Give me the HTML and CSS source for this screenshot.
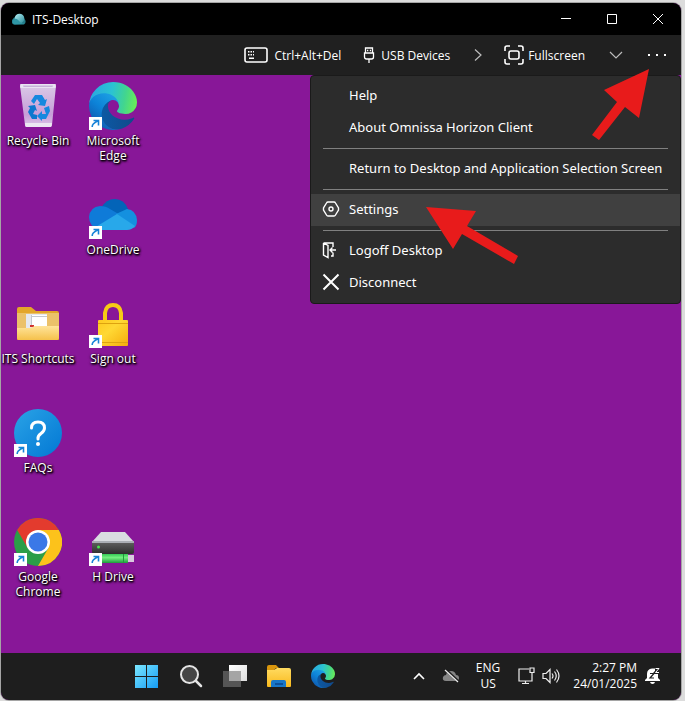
FILE: index.html
```html
<!DOCTYPE html>
<html lang="en">
<head>
<meta charset="utf-8">
<meta name="viewport" content="width=device-width, initial-scale=1">
<title>ITS-Desktop</title>
<link rel="stylesheet" href="styles.css">
</head>
<body>
<svg class="defs" aria-hidden="true">
  <defs>
    <linearGradient id="edge-a" x1="63" y1="177" x2="241" y2="177" gradientUnits="userSpaceOnUse"><stop offset="0" stop-color="#0c59a4"/><stop offset="1" stop-color="#114a8b"/></linearGradient>
    <linearGradient id="edge-b" x1="150" y1="100" x2="46" y2="225" gradientUnits="userSpaceOnUse"><stop offset="0" stop-color="#1b9de2"/><stop offset=".5" stop-color="#0d83d8"/><stop offset="1" stop-color="#0f5fb4"/></linearGradient>
    <linearGradient id="edge-c" x1="10" y1="60" x2="250" y2="100" gradientUnits="userSpaceOnUse"><stop offset="0" stop-color="#2aa8e0"/><stop offset=".45" stop-color="#2bc3d2"/><stop offset=".75" stop-color="#42d58f"/><stop offset="1" stop-color="#66eb5b"/></linearGradient>
    <linearGradient id="yellow" x1="0" y1="0" x2="0" y2="1"><stop offset="0" stop-color="#ffdb61"/><stop offset="1" stop-color="#f9b91c"/></linearGradient>
    <linearGradient id="pale" x1="0" y1="0" x2="0" y2="1"><stop offset="0" stop-color="#ffe49a"/><stop offset="1" stop-color="#f5c14b"/></linearGradient>
    <linearGradient id="lock" x1="0" y1="0" x2="1" y2="1"><stop offset="0" stop-color="#ffc91f"/><stop offset=".4" stop-color="#ffd834"/><stop offset="1" stop-color="#f5ac0c"/></linearGradient>
    <linearGradient id="bin" x1="0" y1="0" x2="0" y2="1"><stop offset="0" stop-color="#d9c8e6"/><stop offset=".7" stop-color="#c79dd8"/><stop offset="1" stop-color="#dcc9e8"/></linearGradient>
    <linearGradient id="help" x1="0" y1="0" x2="1" y2="1"><stop offset="0" stop-color="#2aa3e6"/><stop offset="1" stop-color="#0277d4"/></linearGradient>
    <linearGradient id="win" x1="0" y1="0" x2="1" y2="1" ><stop offset="0" stop-color="#7be7ff"/><stop offset="1" stop-color="#159cf5"/></linearGradient>
    <linearGradient id="drive" x1="0" y1="0" x2="0" y2="1"><stop offset="0" stop-color="#5b5b5b"/><stop offset="1" stop-color="#2e2e2e"/></linearGradient>
    <linearGradient id="pipe" x1="0" y1="0" x2="0" y2="1"><stop offset="0" stop-color="#35c956"/><stop offset=".4" stop-color="#74f080"/><stop offset="1" stop-color="#1d9c3c"/></linearGradient>
    <linearGradient id="teal" x1="0" y1="0" x2="1" y2="1"><stop offset="0" stop-color="#b5f1f5"/><stop offset="1" stop-color="#2c8d9b"/></linearGradient>
    <linearGradient id="pane" x1="0" y1="0" x2="1" y2="1"><stop offset="0" stop-color="#ffffff"/><stop offset="1" stop-color="#dddddd"/></linearGradient>
  </defs>
  <symbol id="edge" viewBox="0 0 256 256">
    <path fill="url(#edge-a)" d="M235.68 190.46a93.73 93.73 0 01-10.54 4.71 101.87 101.87 0 01-35.9 6.46c-47.32 0-88.54-32.55-88.54-74.32A31.48 31.48 0 01117.13 100c-42.8 1.8-53.8 46.4-53.8 72.53 0 73.88 68.09 81.37 82.76 81.37 7.91 0 19.84-2.3 27-4.56l1.31-.44a128.34 128.34 0 0066.6-52.8 4 4 0 00-5.32-5.64z"/>
    <path fill="url(#edge-b)" d="M105.73 241.42a79.2 79.2 0 01-22.74-21.34 80.72 80.72 0 0129.53-120c3.12-1.47 8.45-4.13 15.54-4a32.35 32.35 0 0125.69 13 31.88 31.88 0 016.36 18.66c0-.21 24.46-79.6-80-79.6-43.9 0-80 41.66-80 78.21a130.15 130.15 0 0012.11 56 128 128 0 00156.38 67.11 75.55 75.55 0 01-62.78-8z"/>
    <path fill="url(#edge-c)" d="M152.33 148.86c-.81 1-3.3 2.5-3.3 5.66 0 2.61 1.7 5.12 4.72 7.23 14.38 10 41.49 8.68 41.56 8.68a59.56 59.56 0 0030.27-8.35A61.38 61.38 0 00256 109.18c.26-22.41-8-37.31-11.34-43.91C223.46 23.84 177.72 0 128 0A128 128 0 000 126.2c.48-36.54 36.8-66.05 80-66.05 3.5 0 23.46.34 42 10.07 16.34 8.58 24.9 18.94 30.85 29.21 6.18 10.67 7.28 24.15 7.28 29.52s-2.74 13.33-7.8 19.91z"/>
  </symbol>
  <symbol id="badge" viewBox="0 0 13 13">
    <path fill="#fff" d="M0 0h13v13H0z"/>
    <path fill="none" stroke="#1683d8" stroke-width="1.6" d="M3.2 10c0-2.500 1-3.600 5.600-6.300M4.500 3.500h5v5"/>
  </symbol>
</svg>

<div class="window">
  <header class="titlebar">
    <svg class="app-icon" viewBox="0 0 14 12" aria-hidden="true"><path fill="#237c89" d="M3 11.500A3 3 0 0 1 1 6c.5-1.500 2-2 3-2l7 1c3 1 3.500 5 1 6.500z"/><circle cx="7.500" cy="5.500" r="4.800" fill="url(#teal)"/><path fill="#2f96a5" d="M2 6c3-1 4 1 6 3s3 1 4.500 2L3 11.500C0 11 0 7 2 6z"/></svg>
    <h1 class="title">ITS-Desktop</h1>
    <button class="caption" aria-label="Minimize"><svg viewBox="0 0 12 12"><path d="M1 5.500h10"/></svg></button>
    <button class="caption" aria-label="Maximize"><svg viewBox="0 0 12 12"><path d="M1.500 1.500h9v9h-9z"/></svg></button>
    <button class="caption" aria-label="Close"><svg viewBox="0 0 12 12"><path d="M1 1l10 10M11 1L1 11"/></svg></button>
  </header>

  <nav class="toolbar" aria-label="Session">
    <button class="tool keys"><svg width="24" height="16" viewBox="0 0 24 16"><rect x="1" y="1" width="22" height="14" rx="2" fill="none" stroke="#fff" stroke-width="1.600"/><path fill="#fff" d="M4 4h1.500v1.500H4zM6.500 4H8v1.500H6.500zM9 4h1v1.500H9zM4 7h1.500v1.500H4zM6.500 7H8v1.500H6.500zM9 7h1v1.500H9zM5 10.500h5V12H5z"/></svg>Ctrl+Alt+Del</button>
    <button class="tool usb"><svg width="12" height="16" viewBox="0 0 12 16"><path fill="none" stroke="#fff" stroke-width="1.300" d="M2.500 6V1h7v5M1.500 6h9v4q0 2-2 2h-5q-2 0-2-2zM6 12v4"/><path fill="#fff" d="M4 2.800h1.300v1.500H4zM6.800 2.800h1.300v1.500H6.800z"/></svg>USB Devices</button>
    <button class="tool more" aria-label="Show more"><svg width="8" height="14" viewBox="0 0 8 14"><path fill="none" stroke="#bbb" stroke-width="1.200" d="M1 1.500L7 7l-6 5.500"/></svg></button>
    <button class="tool full"><svg width="20" height="20" viewBox="0 0 20 20"><path fill="none" stroke="#fff" stroke-width="1.600" d="M1 6V3q0-2 2-2h3M14 1h3q2 0 2 2v3M19 14v3q0 2-2 2h-3M6 19H3q-2 0-2-2v-3"/><rect x="5" y="6" width="10" height="8" rx="2" fill="none" stroke="#fff" stroke-width="1.600"/></svg>Fullscreen</button>
    <button class="tool down" aria-label="Display options"><svg width="14" height="8" viewBox="0 0 14 8"><path fill="none" stroke="#bbb" stroke-width="1.200" d="M1 1l6 6 6-6"/></svg></button>
    <button class="tool dots" aria-label="Options" aria-expanded="true"><svg width="20" height="4" viewBox="0 0 20 4"><path fill="#fff" d="M1 1h2v2H1zM9 1h2v2H9zM17 1h2v2h-2z"/></svg></button>
  </nav>

  <main class="desktop">
    <div class="icons">
      <button class="shortcut"><svg viewBox="0 0 48 48"><path fill="url(#bin)" d="M6 4h36l-4 39q0 2-2 2H13q-2 0-2-2z"/><path fill="#e9e3f2" d="M6 3q0-1 1-1h34q1 0 1 1l-.5 3h-35z"/><path fill="#c5b2d8" d="M9 3.500h30l-.5 1.500h-29z"/><path fill="#ece6f2" d="M11 41h27l-.5 3q-.5 1-1.500 1H13q-1.500 0-1.700-1z"/><path fill="#1688df" d="M17 19l4-6h7l3 5 2-1-2 7-7-1 2-2-3-4-3 5z"/><path fill="#0d78cf" d="M14 24l7-1 2 6-2-1-2 4 4 1v4h-5l-4-7 2-4z"/><path fill="#1688df" d="M30 26l5-2 1 5-4 8h-4v2l-5-5 5-5v3h4z"/></svg><span>Recycle Bin</span></button>
      <button class="shortcut"><svg viewBox="0 0 48 48"><use href="#edge" width="48" height="48"/><use href="#badge" y="35" width="13" height="13"/></svg><span>Microsoft Edge</span></button>

      <button class="shortcut second"><svg viewBox="0 0 48 48"><path fill="#0364b8" d="M12 17Q17 8 26 8q9 0 13 10L26 30z"/><path fill="#0f7bd8" d="M11 15q6 0 10 3l12 7-24 13Q0 35 0 26 1 16 11 15z"/><path fill="#1490df" d="M27 23l11-5q9 1 10 11 0 6-3 8z"/><path fill="#28a8ea" d="M5 37l23-14 18 12q-3 4-8 4H12q-4 0-7-2z"/><use href="#badge" y="35" width="13" height="13"/></svg><span>OneDrive</span></button>

      <button class="shortcut"><svg viewBox="0 0 48 48"><path fill="#e3a62a" d="M3 9q0-2 2-2h12l5 4h21q2 0 2 2v26q0 1-1 1H4q-1 0-1-1z"/><path fill="#ebc16a" d="M3 13h42v15H3z"/><path fill="#e5e8ef" d="M12 14h21v15H12z"/><path fill="#fff" d="M18 15h15v11H18z"/><path fill="#c3c7d0" d="M17 15h1v11h-1zM18 16h15v1H18z"/><path fill="#cf3030" d="M16 25h4v2h-4z"/><path fill="url(#pale)" d="M3 28h13l5-2h24v12q0 2-2 2H5q-2 0-2-2z"/></svg><span>ITS Shortcuts</span></button>
      <button class="shortcut"><svg viewBox="0 0 48 48"><path fill="none" stroke="#f6cb15" stroke-width="4" d="M16 23V13q1-8 8-8t8 8v10"/><rect x="9" y="20" width="30" height="26" rx="1" fill="url(#lock)"/><path stroke="#dda20f" d="M9 23.500h30M9 42.500h30"/><use href="#badge" y="35" width="13" height="13"/></svg><span>Sign out</span></button>

      <button class="shortcut"><svg viewBox="0 0 48 48"><circle cx="24" cy="24" r="24" fill="url(#help)"/><path fill="none" stroke="#fff" stroke-width="3" stroke-linecap="round" d="M17.500 19q0-6 6.500-6t6.500 6q0 3-3.500 5.500T24 30"/><circle cx="24" cy="35" r="2" fill="#fff"/><use href="#badge" y="35" width="13" height="13"/></svg><span>FAQs</span></button>

      <button class="shortcut first"><svg viewBox="0 0 48 48"><circle cx="24" cy="24" r="24" fill="#2b9e48"/><path fill="#e33b2e" d="M3.200 12A24 24 0 0 1 44.800 12H24L13.600 30z"/><path fill="#fcc21b" d="M44.800 12A24 24 0 0 1 24 48L34.400 30 24 12z"/><circle cx="24" cy="24" r="12" fill="#fff"/><circle cx="24" cy="24" r="9.500" fill="#3b78e7"/><use href="#badge" y="35" width="13" height="13"/></svg><span>Google Chrome</span></button>
      <button class="shortcut"><svg viewBox="0 0 48 48"><path fill="#d9dce0" d="M12 14h24l9 10H3z"/><path fill="#aaaeb4" d="M3 23h42v2H3z"/><path fill="url(#drive)" d="M3 25h42v9q0 2-2 2H5q-2 0-2-2z"/><circle cx="9.500" cy="29" r="1.500" fill="#49e64e"/><path fill="url(#pipe)" d="M10 36h29v9H10z"/><path fill="#209b3c" d="M34 36h1v9h-1z"/><path fill="#d9c9de" d="M39 37h6v7h-6z"/><use href="#badge" y="35" width="13" height="13"/></svg><span>H Drive</span></button>
    </div>

    <div class="menu" role="menu">
      <button role="menuitem">Help</button>
      <button role="menuitem">About Omnissa Horizon Client</button>
      <hr>
      <button role="menuitem">Return to Desktop and Application Selection Screen</button>
      <hr>
      <button role="menuitem" class="active"><svg viewBox="0 0 18 18"><path d="M6 2h6q1 0 1.500 1L16.500 8v2l-3 5q-.5 1-1.500 1H6q-1 0-1.500-1l-3-5V8l3-5Q5 2 6 2z"/><circle cx="9" cy="9" r="2"/></svg>Settings</button>
      <hr>
      <button role="menuitem"><svg viewBox="0 0 18 18"><path d="M1.500 2H11v4M1.500 2v12l4.500 2.500V4.500L1.500 2M11 11.500V15H9M14 9H8M10.500 6.500L8 9l2.500 2.500"/></svg>Logoff Desktop</button>
      <button role="menuitem"><svg viewBox="0 0 18 18"><path stroke-width="2" d="M1.500 1.500l15 15M16.500 1.500l-15 15"/></svg>Disconnect</button>
    </div>
  </main>

  <footer class="taskbar">
    <nav class="apps" aria-label="Taskbar">
      <button aria-label="Start"><svg viewBox="0 0 24 24"><path fill="url(#win)" d="M0 1h11v11H0zM12 1h11v11H12zM0 13h11v11H0zM12 13h11v11H12z"/></svg></button>
      <button aria-label="Search"><svg viewBox="0 0 24 24"><circle cx="10.500" cy="10.500" r="8.500" fill="#454545" stroke="#e5e5e5" stroke-width="2"/><path stroke="#e5e5e5" stroke-width="2.500" stroke-linecap="round" d="M17 17l5 5"/></svg></button>
      <button aria-label="Task view"><svg viewBox="0 0 24 24"><path fill="url(#pane)" d="M6 1h18v16H6z"/><path fill="#555" d="M0 7h18v16H0z"/><path fill="#a5a5a5" d="M6 7h12v10H6z"/></svg></button>
      <button aria-label="File Explorer"><svg viewBox="0 0 24 24"><path fill="#d9960d" d="M0 3q0-2 2-2h7l3 3h-3L7 6H0z"/><path fill="url(#yellow)" d="M0 6h7l3-2h12q2 0 2 2v16q0 1-1 1H1q-1 0-1-1z"/><path fill="#1877c9" d="M4 23v-5q0-2 2-2h11q2 0 2 2v5z"/><path fill="#0c519b" d="M8 19h8v2H8z"/></svg></button>
      <button aria-label="Microsoft Edge"><svg viewBox="0 0 24 24"><use href="#edge" width="24" height="24"/></svg></button>
    </nav>
    <div class="tray">
      <button class="hidden-icons" aria-label="Show hidden icons"><svg width="12" height="8" viewBox="0 0 12 8"><path fill="none" stroke="#fff" stroke-width="1.600" d="M1 7l5-5 5 5"/></svg></button>
      <button class="cloud" aria-label="OneDrive"><svg width="18" height="14" viewBox="0 0 18 14"><path fill="#858585" d="M4 12Q0 12 1 8q1-2 3-2 1-4 5-4 4 0 5 4 3 0 3 3t-3 3z"/><path stroke="#1e1e1e" stroke-width="2.500" d="M4 1l13 12"/><path stroke="#eee" stroke-width="1.200" d="M3 1l13 12"/></svg></button>
      <button class="language">ENG<br>US</button>
      <button class="system" aria-label="Network and volume"><svg width="18" height="18" viewBox="0 0 18 18"><path fill="none" stroke="#eee" stroke-width="1.200" d="M11 2H1v12h13V9M7.500 14v3M4 16.500h7M12 1h4v4.500h-4zM14 6v5"/></svg><svg width="18" height="16" viewBox="0 0 18 16"><path fill="none" stroke="#eee" stroke-width="1.200" d="M1 5.500h3l4-4v13l-4-4H1zM10 5.500q2 2.500 0 5M12.500 3.500q3.500 4.500 0 9M14.500 1.500q5 6.500 0 13"/></svg></button>
      <button class="clock"><time datetime="2025-01-24T14:27">2:27 PM<br>24/01/2025</time></button>
      <button class="bell" aria-label="Notifications"><svg width="16" height="18" viewBox="0 0 16 18"><path fill="#fff" d="M0 13l2-2V7q0-5 5-5.500h3V6h3v5l2 2v1H0zM5 15h5q-.5 2-2.500 2T5 15z"/><path fill="none" stroke="#1e1e1e" stroke-width="1.200" d="M5 6.500h4L5 11h4"/><path fill="none" stroke="#1e1e1e" stroke-width="3" d="M10.500 1.500H14l-3.500 4H14"/><path fill="none" stroke="#fff" d="M10.500 1.500h3.500l-3.500 4H14"/></svg></button>
    </div>
  </footer>
</div>

<svg class="pointer first-pointer" width="58" height="72" viewBox="592 69 58 72" aria-hidden="true"><path d="M649 69L604 90 617 102 592 135 599 140 625 107 639 118z"/></svg>
<svg class="pointer second-pointer" width="94" height="58" viewBox="425 207 94 58" aria-hidden="true"><path d="M426 207L476 211 467 226 518 256 514 264 462 234 453 249z"/></svg>
</body>
</html>
```
FILE: styles.css
```css
* {
  box-sizing: border-box;
}

body {
  margin: 0;
  padding: 3px 4px 1px 1px;
  min-height: 100vh;
  display: flex;
  background: #dcdcdc;
  color: #fff;
  font-family: "Open Sans", "Noto Sans", sans-serif;
  font-size: 12px;
}

button {
  margin: 0;
  padding: 0;
  border: 0;
  background: none;
  color: inherit;
  font: inherit;
}

svg {
  display: block;
  flex: none;
}

.defs {
  position: absolute;
  width: 0;
  height: 0;
}

.window {
  flex: 1;
  min-width: 0;
  display: flex;
  flex-direction: column;
  border-radius: 8px;
  overflow: hidden;
  background: #881798;
  box-shadow: 0 0 0 1px #a5a5a5;
}

.titlebar {
  display: flex;
  align-items: center;
  height: 32px;
  padding-left: 11px;
  background: #000;
}

.app-icon {
  width: 14px;
  height: 12px;
}

.title {
  flex: 1;
  margin: 0 0 0 6px;
  font-size: 12px;
  font-weight: 400;
}

.caption {
  display: grid;
  place-items: center;
  width: 46px;
  height: 32px;
}

.caption svg {
  width: 12px;
  height: 12px;
  fill: none;
  stroke: #fff;
}

.toolbar {
  display: flex;
  justify-content: flex-end;
  align-items: center;
  height: 40px;
  padding-right: 14px;
  background: #202020;
}

.tool {
  display: flex;
  align-items: center;
  gap: 6px;
  height: 32px;
  white-space: nowrap;
}

.keys,
.more {
  margin-right: 22px;
}

.usb,
.full,
.down {
  margin-right: 24px;
}

.full {
  gap: 4px;
}

.desktop {
  position: relative;
  flex: 1;
  padding: 7px 0;
}

.icons {
  display: grid;
  grid-template-columns: 74px 76px;
  grid-auto-rows: 109px;
}

.shortcut {
  display: flex;
  flex-direction: column;
  align-items: center;
  gap: 3px;
  line-height: 15px;
  text-shadow: 1px 1px 2px #000, 1px 1px 2px #000, 0 1px 3px #000;
}

.shortcut svg {
  width: 48px;
  height: 48px;
}

.second {
  grid-column: 2;
}

.first {
  grid-column: 1;
}

.menu {
  position: absolute;
  top: 0;
  right: 0;
  width: 371px;
  padding: 4px 0;
  border: 1px solid #1a1a1a;
  border-radius: 4px;
  background: #2c2c2c;
  font-family: "Noto Sans", "Open Sans", sans-serif;
  font-size: 13px;
}

.menu button {
  display: flex;
  align-items: center;
  width: 100%;
  height: 32px;
  padding: 0 0 2px 38px;
  white-space: nowrap;
}

.menu button:has(svg) {
  gap: 9px;
  padding-left: 11px;
}

.menu .active {
  background: #404040;
}

.menu hr {
  height: 1px;
  margin: 4px 12px;
  border: 0;
  background: #808080;
}

.menu svg {
  width: 18px;
  height: 18px;
  fill: none;
  stroke: #fff;
  stroke-width: 1.4;
}

.taskbar {
  display: flex;
  justify-content: space-between;
  align-items: center;
  height: 47px;
  padding: 0 20px 2px 124px;
  background: #1e1e1e;
}

.apps,
.tray {
  display: flex;
  align-items: center;
}

.apps button {
  display: grid;
  place-items: center;
  width: 44px;
  height: 44px;
}

.apps svg {
  width: 24px;
  height: 24px;
}

.tray {
  font-size: 12px;
  line-height: 16px;
}

.hidden-icons {
  margin-right: 17px;
}

.cloud {
  margin-right: 16px;
}

.language {
  margin-right: 18px;
}

.system {
  display: flex;
  align-items: center;
  gap: 6px;
  margin-right: 13px;
}

.clock {
  margin-right: 8px;
  text-align: right;
}

.pointer {
  position: absolute;
  fill: #e81b1b;
  pointer-events: none;
}

.first-pointer {
  top: 69px;
  right: 35px;
}

.second-pointer {
  top: 207px;
  right: 166px;
}
```
